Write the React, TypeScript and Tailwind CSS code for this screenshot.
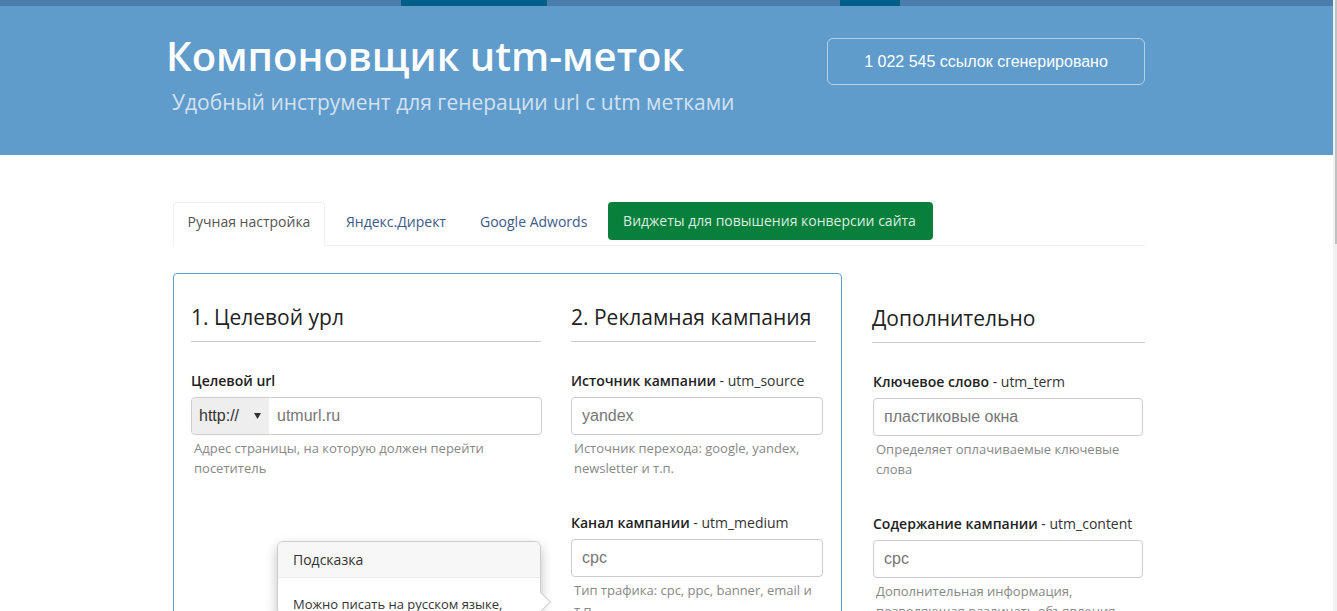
const sans = "font-['Open_Sans',sans-serif]";

function Field({ name, utm, value, help, className }: { name: string; utm?: string; value: string; help: string[]; className?: string }) {
  return (
    <div className={className}>
      <label className="block h-[19px] text-[14px] leading-[19px] text-[#222] whitespace-nowrap">
        <span className="font-semibold">{name}</span>
        {utm && <span className="text-[#333]"> - {utm}</span>}
      </label>
      <div className="mt-[7px] h-[38px] rounded-[4px] border border-[#ccc] bg-white pl-[10px] font-['Liberation_Sans',sans-serif] text-[16px] leading-[36px] text-[#777]">
        {value}
      </div>
      <p className="mt-[3px] pl-[3px] text-[13px] leading-[20px] text-[#888]">
        {help.map((line) => (
          <span key={line} className="block whitespace-nowrap">{line}</span>
        ))}
      </p>
    </div>
  );
}

function SectionTitle({ children, className }: { children: string; className?: string }) {
  return (
    <h2 className={`h-[40px] border-b border-[#ccc] text-[21px] leading-[30px] text-[#222] whitespace-nowrap ${className ?? ""}`}>
      {children}
    </h2>
  );
}

export default function App() {
  return (
    <div className={`relative h-[611px] overflow-hidden bg-white ${sans}`}>
      <div className="flex h-[6px] bg-[#4a7dab]">
        <div className="ml-[401px] w-[146px] bg-[#005f87]" />
        <div className="ml-[293px] w-[60px] bg-[#005f87]" />
      </div>

      <header className="flex h-[149px] items-start justify-between bg-[#5f9bcb] pl-[166px] pr-[192px]">
        <div>
          <h1 className="mt-[25px] text-[40px] font-semibold leading-[50px] text-white whitespace-nowrap">Компоновщик utm-меток</h1>
          <p className="ml-[6px] mt-[7px] text-[21px] leading-[28px] text-[#d3e2f0] whitespace-nowrap">Удобный инструмент для генерации url с utm метками</p>
        </div>
        <div className="mt-[32px] flex h-[47px] w-[318px] items-center justify-center rounded-[6px] border border-[#b5d0e6] font-['Liberation_Sans',sans-serif] text-[16px] text-white">
          1 022 545 ссылок сгенерировано
        </div>
      </header>

      <main className="ml-[173px] w-[972px]">
        <nav className="mt-[47px] flex h-[44px] items-start border-b border-[#eee] text-[14px] leading-[19px]">
          <a className="flex h-[44px] w-[152px] items-center justify-center rounded-t-[4px] border border-[#eee] border-b-white bg-white pb-[6px] text-[#555]">Ручная настройка</a>
          <a className="flex h-[43px] w-[155px] items-center pb-[5px] pl-[21px] text-[#3d5a8a]">Яндекс.Директ</a>
          <a className="flex h-[43px] w-[128px] items-center pb-[5px] text-[#3d5a8a]">Google Adwords</a>
          <a className="flex h-[38px] w-[325px] items-center justify-center rounded-[4px] bg-[#087f3a] pb-[2px] pr-[2px] text-[#d8eee0]">Виджеты для повышения конверсии сайта</a>
        </nav>

        <div className="mt-[27px] flex items-start">
          <section className="relative flex h-[400px] w-[669px] shrink-0 rounded-[4px] border border-[#5f9bcb] pl-[17px] pt-[28px]">
            <div className="w-[350px] shrink-0">
              <SectionTitle>1. Целевой урл</SectionTitle>
              <div className="mt-[29px]">
                <label className="block h-[19px] text-[14px] font-semibold leading-[19px] text-[#222]">Целевой url</label>
                <div className="mt-[7px] flex h-[38px] w-[351px] overflow-hidden rounded-[4px] border border-[#ccc] font-['Liberation_Sans',sans-serif] text-[16px] leading-[36px]">
                  <div className="flex w-[77px] items-center justify-between bg-[#eee] pl-[7px] pr-[8px] text-[#333]">
                    <span>http://</span>
                    <svg width="7" height="6" viewBox="0 0 7 6" className="fill-[#333]"><path d="M0 0h7L3.5 6z" /></svg>
                  </div>
                  <div className="pl-[8px] text-[#777]">utmurl.ru</div>
                </div>
                <p className="mt-[3px] pl-[3px] text-[13px] leading-[20px] text-[#888]">
                  <span className="block">Адрес страницы, на которую должен перейти</span>
                  <span className="block">посетитель</span>
                </p>
              </div>
            </div>

            <div className="ml-[30px] w-[252px] shrink-0">
              <SectionTitle className="mr-[7px]">2. Рекламная кампания</SectionTitle>
              <Field className="mt-[29px]" name="Источник кампании" utm="utm_source" value="yandex" help={["Источник перехода: google, yandex,", "newsletter и т.п."]} />
              <Field className="mt-[35px]" name="Канал кампании" utm="utm_medium" value="cpc" help={["Тип трафика: cpc, ppc, banner, email и", "т.п."]} />
            </div>

            <div className="absolute left-[103px] top-[267px] w-[264px] rounded-[6px] border border-[#ccc] bg-white shadow-[0_5px_12px_rgba(0,0,0,0.25)]">
              <div className="h-[36px] rounded-t-[5px] border-b border-[#ebebeb] bg-[#f7f7f7] pl-[15px] text-[14px] leading-[36px] text-[#333]">Подсказка</div>
              <div className="pl-[15px] pr-[10px] pt-[16px] text-[13px] leading-[20px] text-[#333]">Можно писать на русском языке,</div>
              <div className="absolute right-[-8px] top-[53px] h-[14px] w-[14px] rotate-45 border-r border-t border-[#ccc] bg-white" />
            </div>
          </section>

          <aside className="ml-[30px] mt-[30px] w-[273px] shrink-0">
            <SectionTitle>Дополнительно</SectionTitle>
            <div className="ml-[1px] w-[270px]">
              <Field className="mt-[29px]" name="Ключевое слово" utm="utm_term" value="пластиковые окна" help={["Определяет оплачиваемые ключевые", "слова"]} />
              <Field className="mt-[35px]" name="Содержание кампании" utm="utm_content" value="cpc" help={["Дополнительная информация,", "позволяющая различать объявления"]} />
            </div>
          </aside>
        </div>
      </main>

      <div className="absolute right-0 top-0 h-[611px] w-[4px] bg-[#f1f1f1]">
        <div className="ml-[2px] h-[244px] bg-[#c1c1c1]" />
      </div>
    </div>
  );
}
